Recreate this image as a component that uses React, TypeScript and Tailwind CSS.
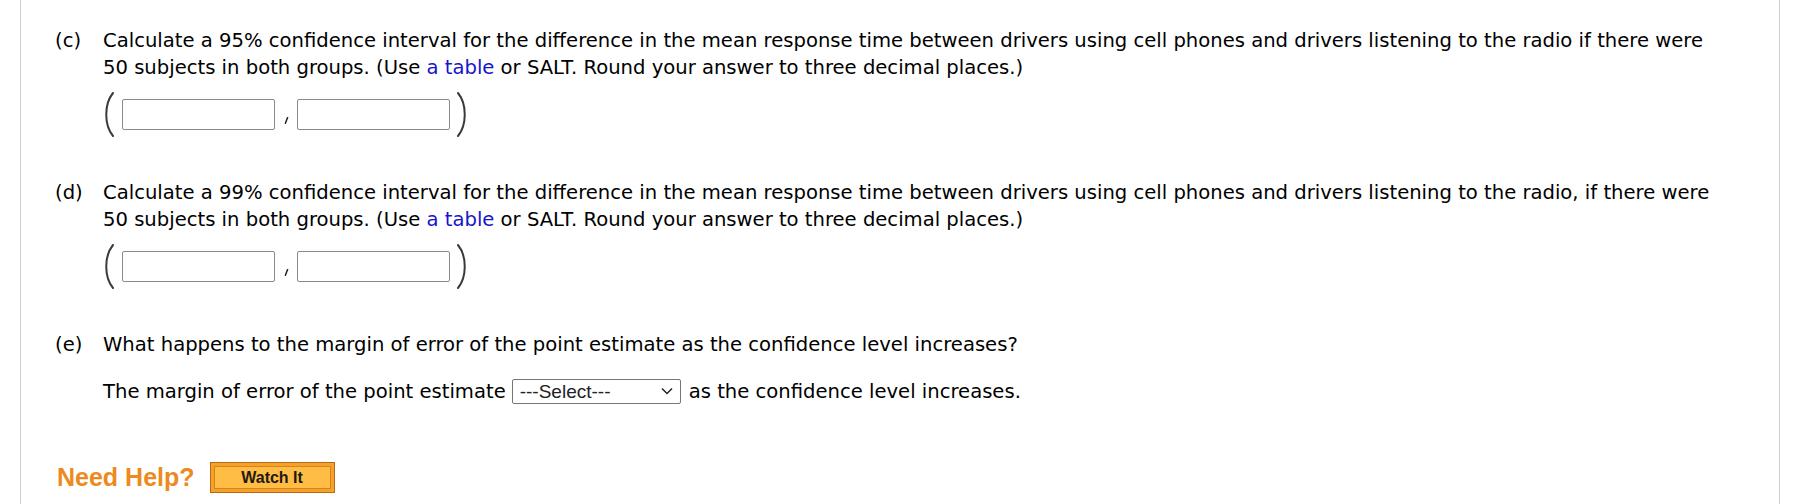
import React from 'react';

const Paren = ({ right = false }: { right?: boolean }) => (
  <svg width="11" height="45" viewBox="0 0 11 45" className={right ? 'shrink-0 -scale-x-100' : 'shrink-0'}>
    <path d="M10 1 C 1 12, 1 33, 10 44" fill="none" stroke="#3a3a3a" strokeWidth="2" strokeLinecap="round" />
  </svg>
);

const IntervalInputs = () => (
  <div className="flex items-center h-[45px]">
    <Paren />
    <input type="text" className="ml-[8px] w-[153px] h-[31px] border border-[#8a8a8a] rounded-[2px] bg-white outline-none" />
    <span className="w-[22px] flex justify-center">
      <svg width="5" height="7" viewBox="0 0 5 7" className="mt-[11px]">
        <path d="M3.6 0.5 L1.4 6.2" stroke="#222" strokeWidth="1.5" strokeLinecap="round" />
      </svg>
    </span>
    <input type="text" className="w-[153px] h-[31px] border border-[#8a8a8a] rounded-[2px] bg-white outline-none" />
    <span className="ml-[7px]">
      <Paren right />
    </span>
  </div>
);

const Link = ({ children }: { children: React.ReactNode }) => (
  <span className="text-[#1515cc]">{children}</span>
);

const Part = ({ label, children }: { label: string; children: React.ReactNode }) => (
  <div className="flex">
    <div className="w-[48px] shrink-0">{label}</div>
    <div className="flex-1">{children}</div>
  </div>
);

export default function App() {
  return (
    <div className="w-[1800px] h-[504px] bg-white overflow-hidden">
      <div className="ml-[20px] w-[1760px] h-full border-x border-[#cfcfcf] pl-[34px] pt-[27px] font-['DejaVu_Sans',Verdana,sans-serif] text-[19.6px] leading-[27px] text-black">
        <Part label="(c)">
          <div className="whitespace-nowrap">
            Calculate a 95% confidence interval for the difference in the mean response time between drivers using cell phones and drivers listening to the radio if there were
          </div>
          <div className="whitespace-nowrap">
            50 subjects in both groups. (Use <Link>a table</Link> or SALT. Round your answer to three decimal places.)
          </div>
          <div className="mt-[11px]">
            <IntervalInputs />
          </div>
        </Part>

        <div className="mt-[42px]">
          <Part label="(d)">
            <div className="whitespace-nowrap">
              Calculate a 99% confidence interval for the difference in the mean response time between drivers using cell phones and drivers listening to the radio, if there were
            </div>
            <div className="whitespace-nowrap">
              50 subjects in both groups. (Use <Link>a table</Link> or SALT. Round your answer to three decimal places.)
            </div>
            <div className="mt-[11px]">
              <IntervalInputs />
            </div>
          </Part>
        </div>

        <div className="mt-[42px]">
          <Part label="(e)">
            <div className="whitespace-nowrap">
              What happens to the margin of error of the point estimate as the confidence level increases?
            </div>
            <div className="mt-[20px] flex items-center whitespace-nowrap">
              <span>The margin of error of the point estimate</span>
              <div className="relative ml-[6px] mr-[8px]">
                <select
                  className="appearance-none w-[169px] h-[25px] border border-[#767676] rounded-[2px] bg-white pl-[7px] font-['Liberation_Sans',Arial,sans-serif] text-[19px] leading-[23px] text-[#222] outline-none"
                  defaultValue=""
                >
                  <option value="">---Select---</option>
                  <option>increases</option>
                  <option>decreases</option>
                  <option>stays the same</option>
                </select>
                <svg
                  width="12"
                  height="8"
                  viewBox="0 0 12 8"
                  className="absolute right-[8px] top-[9px] pointer-events-none"
                >
                  <path d="M1 1.5 L6 6.5 L11 1.5" fill="none" stroke="#222" strokeWidth="1.5" />
                </svg>
              </div>
              <span>as the confidence level increases.</span>
            </div>
          </Part>
        </div>

        <div className="mt-[57px] ml-[2px] flex items-center font-['Liberation_Sans',Arial,sans-serif]">
          <span className="text-[25px] leading-[31px] font-bold text-[#ec8a1e]">Need Help?</span>
          <button className="ml-[15px] w-[125px] h-[31px] border border-[#b56a1a] bg-[#f7a128] p-[3px]">
            <span className="flex h-full w-full items-center justify-center border border-[#d2841f] bg-[#ffbd45] text-[16px] font-bold text-[#1e1a12]">
              Watch It
            </span>
          </button>
        </div>
      </div>
    </div>
  );
}
